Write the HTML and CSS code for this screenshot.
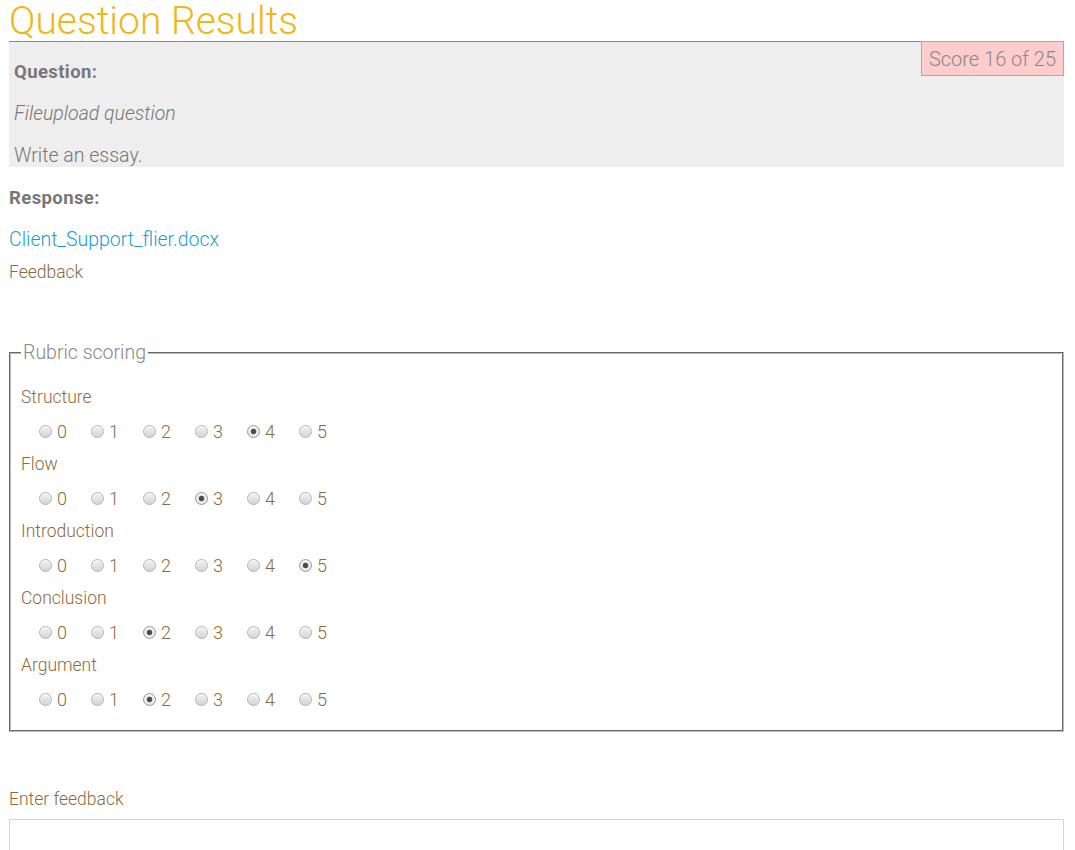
FILE: index.html
```html
<!DOCTYPE html>
<html lang="en">
<head>
    <meta charset="UTF-8">
    <title>Question Results</title>
    <link rel="stylesheet" href="styles.css">
</head>
<body>
    <div class="page">
        <h1 class="title">Question Results</h1>

        <div class="question">
            <div class="score">Score 16 of 25</div>
            <p class="heading">Question:</p>
            <p class="qtype">Fileupload question</p>
            <p class="qtext">Write an essay.</p>
        </div>

        <p class="heading response">Response:</p>
        <a class="file" href="#">Client_Support_flier.docx</a>
        <div class="feedback-label">Feedback</div>

        <fieldset class="rubric">
            <legend>Rubric scoring</legend>

            <div class="criterion">
                <div class="crit-name">Structure</div>
                <div class="choices">
                    <label class="choice"><input type="radio" name="structure"> 0</label>
                    <label class="choice"><input type="radio" name="structure"> 1</label>
                    <label class="choice"><input type="radio" name="structure"> 2</label>
                    <label class="choice"><input type="radio" name="structure"> 3</label>
                    <label class="choice"><input type="radio" name="structure" checked> 4</label>
                    <label class="choice"><input type="radio" name="structure"> 5</label>
                </div>
            </div>

            <div class="criterion">
                <div class="crit-name">Flow</div>
                <div class="choices">
                    <label class="choice"><input type="radio" name="flow"> 0</label>
                    <label class="choice"><input type="radio" name="flow"> 1</label>
                    <label class="choice"><input type="radio" name="flow"> 2</label>
                    <label class="choice"><input type="radio" name="flow" checked> 3</label>
                    <label class="choice"><input type="radio" name="flow"> 4</label>
                    <label class="choice"><input type="radio" name="flow"> 5</label>
                </div>
            </div>

            <div class="criterion">
                <div class="crit-name">Introduction</div>
                <div class="choices">
                    <label class="choice"><input type="radio" name="intro"> 0</label>
                    <label class="choice"><input type="radio" name="intro"> 1</label>
                    <label class="choice"><input type="radio" name="intro"> 2</label>
                    <label class="choice"><input type="radio" name="intro"> 3</label>
                    <label class="choice"><input type="radio" name="intro"> 4</label>
                    <label class="choice"><input type="radio" name="intro" checked> 5</label>
                </div>
            </div>

            <div class="criterion">
                <div class="crit-name">Conclusion</div>
                <div class="choices">
                    <label class="choice"><input type="radio" name="conclusion"> 0</label>
                    <label class="choice"><input type="radio" name="conclusion"> 1</label>
                    <label class="choice"><input type="radio" name="conclusion" checked> 2</label>
                    <label class="choice"><input type="radio" name="conclusion"> 3</label>
                    <label class="choice"><input type="radio" name="conclusion"> 4</label>
                    <label class="choice"><input type="radio" name="conclusion"> 5</label>
                </div>
            </div>

            <div class="criterion">
                <div class="crit-name">Argument</div>
                <div class="choices">
                    <label class="choice"><input type="radio" name="argument"> 0</label>
                    <label class="choice"><input type="radio" name="argument"> 1</label>
                    <label class="choice"><input type="radio" name="argument" checked> 2</label>
                    <label class="choice"><input type="radio" name="argument"> 3</label>
                    <label class="choice"><input type="radio" name="argument"> 4</label>
                    <label class="choice"><input type="radio" name="argument"> 5</label>
                </div>
            </div>
        </fieldset>

        <label class="enter-label" for="feedback">Enter feedback</label>
        <textarea id="feedback" class="feedback-box"></textarea>
    </div>
</body>
</html>
```

FILE: styles.css
```css
body {
    margin: 0;
    font-family: Roboto, "Liberation Sans", sans-serif;
    font-weight: 300;
    color: #777;
    background: #fff;
}

.page {
    margin: 0 11px 0 9px;
}

.title {
    margin: 0;
    padding-top: 2px;
    font-size: 39px;
    font-weight: 300;
    line-height: 39px;
    color: #f0b719;
    border-bottom: 1px solid #8a8a8a;
}

.question {
    background: #eee;
    padding: 18px 0 0 5px;
}

.score {
    float: right;
    margin-top: -19px;
    height: 33px;
    line-height: 35px;
    padding: 0 7px;
    background: #fdcccc;
    border: 1px solid #aaa;
    color: #888;
    font-size: 20px;
}

.question p {
    margin: 0 0 18px;
    line-height: 24px;
    font-size: 19.5px;
}

.question p:last-child {
    margin-bottom: 0;
    line-height: 23px;
}

.heading {
    font-weight: 700;
    color: #777;
    letter-spacing: 0.4px;
}

.question .heading,
.response {
    font-size: 18.5px;
}

.qtype {
    font-style: italic;
}

.response {
    margin: 18px 0 0;
    line-height: 26px;
}

.file {
    display: block;
    margin-top: 16px;
    font-size: 19.5px;
    line-height: 26px;
    color: #1a9fd0;
    text-decoration: none;
}

.feedback-label {
    margin-top: 7px;
    font-size: 17.5px;
    line-height: 24px;
    color: #8c6a40;
}

.rubric {
    margin: 57px 0 0;
    padding: 20px 10px 10px;
    border: 2px groove #bbb;
}

.rubric legend {
    padding: 0 2px;
    font-size: 19.5px;
    line-height: 24px;
    color: #888;
}

.crit-name {
    margin-bottom: 10px;
    font-size: 17.5px;
    line-height: 24px;
    color: #8c6a40;
}

.choices {
    display: flex;
    margin: 0 0 9px 18px;
    height: 24px;
}

.choice {
    display: flex;
    align-items: center;
    gap: 5px;
    width: 52px;
    font-size: 18px;
    color: #8c6a40;
}

.choice input {
    appearance: none;
    -webkit-appearance: none;
    margin: 0;
    width: 13px;
    height: 13px;
    border-radius: 50%;
    border: 1px solid #b4b4b4;
    background: linear-gradient(#f2f2f2, #d4d4d4);
    box-shadow: inset 0 1px 1px rgba(255, 255, 255, 0.8);
}

.choice input:checked {
    background: radial-gradient(circle, #444 0, #555 2.5px, #f0f0f0 3.2px, #d8d8d8 100%);
    border-color: #999;
}

.enter-label {
    display: block;
    margin-top: 55px;
    font-size: 17.5px;
    line-height: 24px;
    color: #8c6a40;
}

.feedback-box {
    display: block;
    box-sizing: border-box;
    width: 100%;
    height: 80px;
    margin-top: 8px;
    border: 1px solid #d6d6d6;
    resize: none;
}
```
